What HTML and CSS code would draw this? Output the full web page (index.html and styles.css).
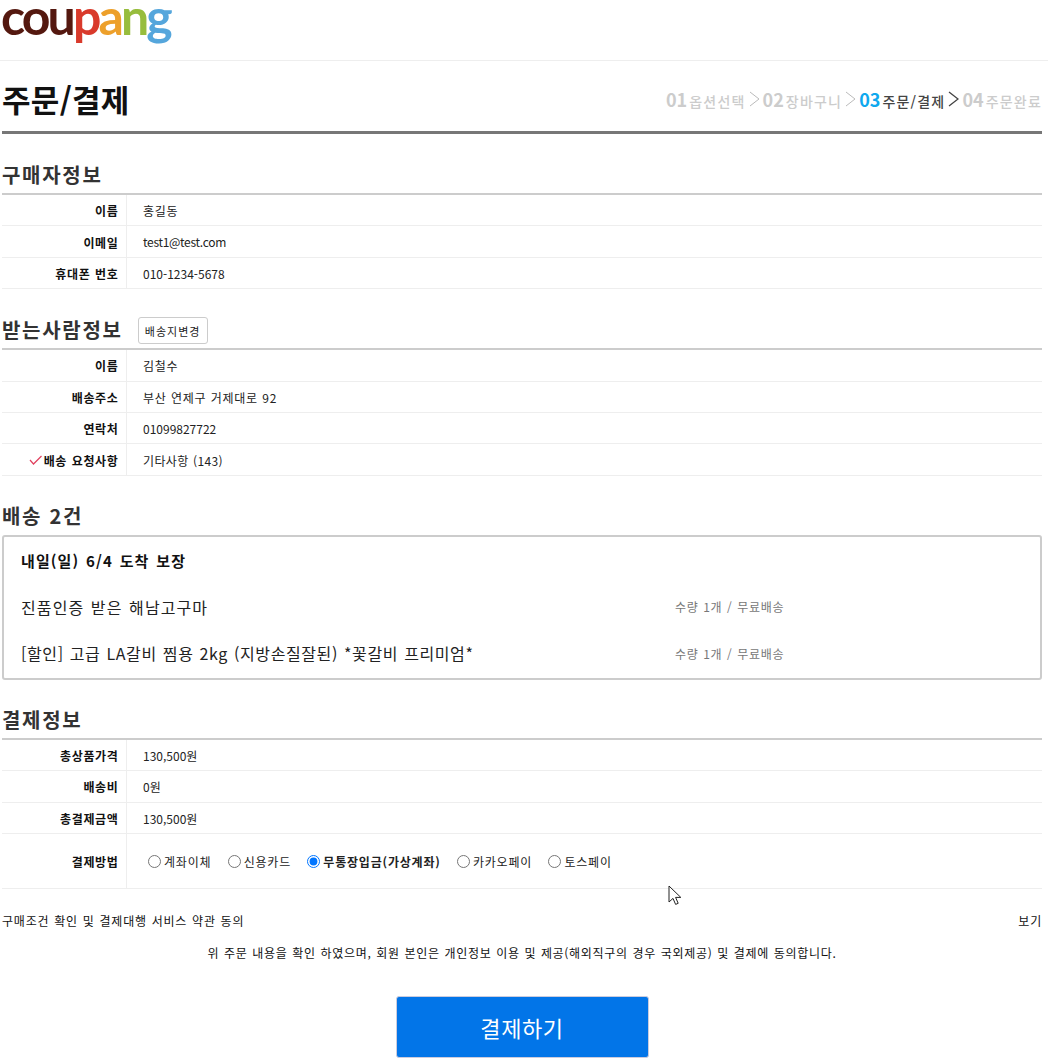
FILE: index.html
```html
<!DOCTYPE html>
<html lang="ko">
<head>
<meta charset="utf-8">
<title>주문/결제</title>
<link rel="stylesheet" href="styles.css">
</head>
<body>
<header class="logo-bar">
  <div class="logo"><span class="c1">cou</span><span class="c2">p</span><span class="c3">a</span><span class="c4">n</span><span class="c5">g</span></div>
</header>
<main class="wrap">
  <div class="title-bar">
    <h1>주문/결제</h1>
    <ol class="steps">
      <li><b>01</b>옵션선택</li>
      <li class="sep"><svg width="11" height="16" viewBox="0 0 11 16"><path d="M1 1l9 7-9 7" fill="none" stroke="currentColor" stroke-width="1"/></svg></li>
      <li><b>02</b>장바구니</li>
      <li class="sep"><svg width="11" height="16" viewBox="0 0 11 16"><path d="M1 1l9 7-9 7" fill="none" stroke="currentColor" stroke-width="1"/></svg></li>
      <li class="on"><b>03</b>주문/결제</li>
      <li class="sep dark"><svg width="11" height="16" viewBox="0 0 11 16"><path d="M1 1l9 7-9 7" fill="none" stroke="currentColor" stroke-width="1.3"/></svg></li>
      <li><b>04</b>주문완료</li>
    </ol>
  </div>

  <section class="sec first">
    <h2>구매자정보</h2>
    <div class="tbl">
      <div class="row"><div class="k">이름</div><div class="v">홍길동</div></div>
      <div class="row"><div class="k">이메일</div><div class="v num email">test1@test.com</div></div>
      <div class="row"><div class="k">휴대폰 번호</div><div class="v num">010-1234-5678</div></div>
    </div>
  </section>

  <section class="sec second">
    <h2>받는사람정보<button class="change">배송지변경</button></h2>
    <div class="tbl">
      <div class="row"><div class="k">이름</div><div class="v">김철수</div></div>
      <div class="row"><div class="k">배송주소</div><div class="v">부산 연제구 거제대로 92</div></div>
      <div class="row"><div class="k">연락처</div><div class="v num">01099827722</div></div>
      <div class="row"><div class="k"><svg class="check" width="13" height="10" viewBox="0 0 13 10"><path d="M1 5l3.5 4L12.5 1" fill="none" stroke="#e0405e" stroke-width="1.2"/></svg>배송 요청사항</div><div class="v memo">기타사항 (143)</div></div>
    </div>
  </section>

  <section class="sec third">
    <h2 class="plain">배송 2건</h2>
    <div class="ship">
      <div class="ship-date">내일(일) 6/4 도착 보장</div>
      <div class="item short"><span class="name">진품인증 받은 해남고구마</span><span class="qty">수량 1개 / 무료배송</span></div>
      <div class="item"><span class="name long">[할인] 고급 LA갈비 찜용 2kg (지방손질잘된) *꽃갈비 프리미엄*</span><span class="qty">수량 1개 / 무료배송</span></div>
    </div>
  </section>

  <section class="sec">
    <h2>결제정보</h2>
    <div class="tbl">
      <div class="row"><div class="k">총상품가격</div><div class="v num">130,500원</div></div>
      <div class="row"><div class="k">배송비</div><div class="v num">0원</div></div>
      <div class="row"><div class="k">총결제금액</div><div class="v num">130,500원</div></div>
      <div class="row tall"><div class="k">결제방법</div>
        <div class="v pays">
          <label><input type="radio" name="pay">계좌이체</label>
          <label><input type="radio" name="pay">신용카드</label>
          <label class="sel"><input type="radio" name="pay" checked>무통장입금(가상계좌)</label>
          <label><input type="radio" name="pay">카카오페이</label>
          <label><input type="radio" name="pay">토스페이</label>
        </div>
      </div>
    </div>
  </section>

  <div class="terms"><span>구매조건 확인 및 결제대행 서비스 약관 동의</span><span>보기</span></div>
  <p class="agree">위 주문 내용을 확인 하였으며, 회원 본인은 개인정보 이용 및 제공(해외직구의 경우 국외제공) 및 결제에 동의합니다.</p>
  <div class="pay-wrap"><button class="pay-btn">결제하기</button></div>
</main>
<svg class="cursor" width="14" height="21" viewBox="0 0 14 21"><path d="M1 1v16l4-3.6 2.6 6 2.6-1.1-2.6-5.9h5.2z" fill="#fff" stroke="#222" stroke-width="1"/></svg>
</body>
</html>
```
FILE: styles.css
```css
* { box-sizing: border-box; }
html, body { margin: 0; padding: 0; }
body {
  position: relative;
  width: 1048px;
  height: 1064px;
  overflow: hidden;
  background: #fff;
  color: #111;
  font-family: "Noto Sans CJK KR", "Noto Sans", sans-serif;
  font-size: 12px;
}
.logo-bar { height: 61px; border-bottom: 1px solid #eee; padding-left: 1px; }
.logo { font-family: Lato, sans-serif; font-weight: 700; font-size: 50px; line-height: 33px; letter-spacing: -2.9px; }
.c1 { color: #54180f; }
.c2 { color: #d93a2b; }
.c3 { color: #eda02b; }
.c4 { color: #97bd3d; }
.c5 { color: #55a6dc; }
.wrap { width: 1040px; margin-left: 2px; }
.title-bar {
  height: 73px;
  border-bottom: 3px solid #777;
  display: flex;
  justify-content: space-between;
  align-items: center;
}
h1 { margin: 0; font-size: 31px; font-weight: 700; color: #111; line-height: 40px; letter-spacing: 0.3px; position: relative; top: 3px; }
.steps { display: flex; align-items: center; gap: 3px; margin: 0; padding: 0; list-style: none; color: #ccc; font-size: 14px; font-weight: 500; letter-spacing: 1.2px; position: relative; top: 3px; }
.steps b { font-size: 18px; font-weight: 700; margin-right: 2px; letter-spacing: 0; }
.steps .on { color: #444; }
.steps .on b { color: #0fa8ee; }
.sep { display: flex; color: #bbb; }
.sep.dark { color: #444; }
.sec { margin-top: 27px; }
.sec.first { margin-top: 28px; }
.sec.second { margin-top: 28px; }
.sec.third { margin-top: 26px; }
h2 {
  margin: 0;
  height: 33px;
  font-size: 20px;
  line-height: 28px;
  font-weight: 700;
  letter-spacing: 1.7px;
  color: #333;
  border-bottom: 2px solid #ccc;
  display: flex;
  align-items: flex-end;
  padding-bottom: 4px;
}
h2.plain { border-bottom: 0; height: 33px; padding-bottom: 5px; }
.change {
  margin: 0 0 0 15px;
  height: 27px;
  width: 70px;
  padding: 0;
  border: 1px solid #ccc;
  border-radius: 3px;
  background: #fff;
  font: 11px "Noto Sans CJK KR", sans-serif;
  letter-spacing: 1px;
  color: #222;
}
.row { display: flex; min-height: 31.4px; border-bottom: 1px solid #eee; }
.row.tall { min-height: 55px; }
.k {
  width: 125px;
  flex: none;
  border-right: 1px solid #eee;
  padding: 1px 7.5px 0 0;
  display: flex;
  align-items: center;
  justify-content: flex-end;
  font-weight: 700;
  font-size: 12px;
  letter-spacing: 0.65px;
  word-spacing: 0.7px;
}
.v { padding: 1px 0 0 16px; display: flex; align-items: center; font-size: 12px; letter-spacing: 0.65px; word-spacing: 0.7px; color: #222; }
.v.num { letter-spacing: 0; }
.v.email { letter-spacing: -0.3px; padding-top: 0; }
.v.memo { letter-spacing: 0.35px; }
.check { margin-right: 2px; }
.ship {
  height: 145px;
  border: 2px solid #ccc;
  border-radius: 3px;
  padding: 0 17px;
}
.ship-date { font-size: 15px; font-weight: 700; height: 46px; line-height: 48px; letter-spacing: 1.1px; word-spacing: 1.5px; }
.item { height: 46px; display: flex; align-items: center; padding-top: 3px; }
.item.short { padding-top: 2px; }
.name { width: 654px; font-size: 16px; color: #222; letter-spacing: 1.1px; word-spacing: 1px; }
.name.long { letter-spacing: 0.6px; word-spacing: 1px; }
.qty { font-size: 12px; color: #777; letter-spacing: 0.7px; word-spacing: 0.7px; }
.pays { padding-left: 21px; gap: 16.3px; letter-spacing: 0.8px; }
.pays label { display: flex; align-items: center; font-size: 12px; color: #222; }
.pays input { margin: 0 3px 0 0; width: 13px; height: 13px; }
.pays .sel { font-weight: 700; }
.terms { display: flex; justify-content: space-between; margin-top: 23px; line-height: 18px; font-size: 12px; letter-spacing: 0.8px; word-spacing: 0.7px; }
.agree { margin: 14px 0 0; text-align: center; line-height: 18px; font-size: 12px; letter-spacing: 0.7px; word-spacing: 0.7px; }
.pay-wrap { display: flex; justify-content: center; margin-top: 34px; }
.pay-btn {
  width: 253px;
  height: 62px;
  border: 1px solid #ccd;
  border-radius: 3px;
  background: #0275e8;
  color: #fff;
  font: 400 22px "Noto Sans CJK KR", sans-serif;
  letter-spacing: 0.6px;
}
.cursor { position: absolute; left: 668px; top: 885px; }
```
